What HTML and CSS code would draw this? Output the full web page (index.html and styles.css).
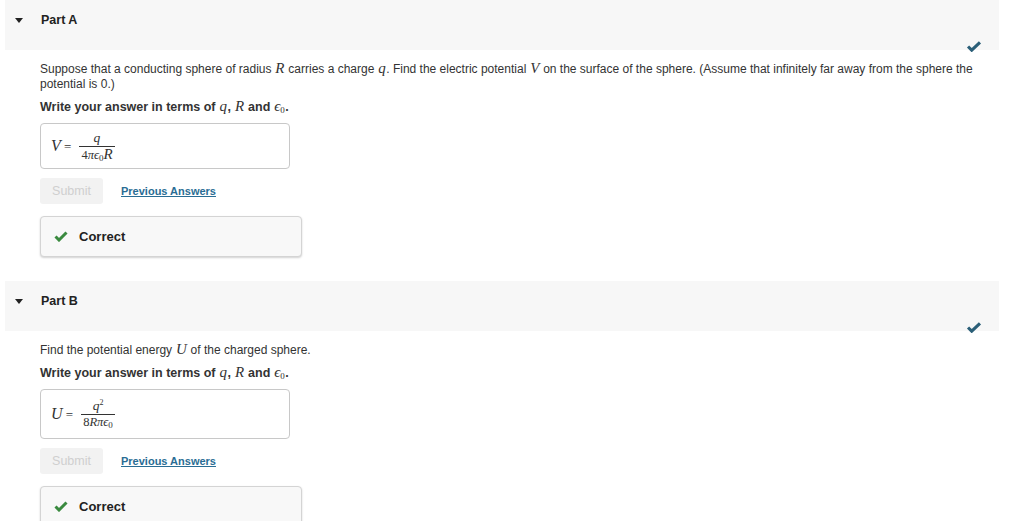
FILE: index.html
```html
<!DOCTYPE html>
<html lang="en">
<head>
  <meta charset="UTF-8" />
  <meta name="viewport" content="width=device-width, initial-scale=1.0"/>
  <title>Parts</title>
  <link rel="stylesheet" href="styles.css">
</head>
<body>

  <div class="part">
    <div class="part-head">
      <span class="caret"></span>
      <h2>Part A</h2>
      <svg class="done" viewBox="0 0 16 12" width="16" height="11"><path d="M1.5 6 L5.5 10 L14.5 1.5" fill="none" stroke="#2b5f78" stroke-width="3.4"/></svg>
    </div>
    <div class="part-body">
      <p class="question">Suppose that a conducting sphere of radius <i class="m">R</i> carries a charge <i class="m">q</i>. Find the electric potential <i class="m">V</i> on the surface of the sphere. (Assume that infinitely far away from the sphere the potential is 0.)</p>
      <p class="hint">Write your answer in terms of <i class="m">q</i>, <i class="m">R</i> and <i class="m">&#x3F5;<sub>0</sub></i>.</p>
      <div class="answer">
        <span class="lhs"><i>V</i> =</span>
        <span class="frac">
          <span class="num"><i>q</i></span>
          <span class="den">4<i>&pi;&#x3F5;</i><sub>0</sub><i class="big">R</i></span>
        </span>
      </div>
      <div class="actions">
        <button class="submit" disabled>Submit</button>
        <a href="#" class="prev">Previous Answers</a>
      </div>
      <div class="result">
        <svg viewBox="0 0 14 11" width="14" height="11"><path d="M1.5 5.5 L5 9 L12.5 1.5" fill="none" stroke="#3a8a3f" stroke-width="3"/></svg>
        <span>Correct</span>
      </div>
    </div>
  </div>

  <div class="part">
    <div class="part-head">
      <span class="caret"></span>
      <h2>Part B</h2>
      <svg class="done" viewBox="0 0 16 12" width="16" height="11"><path d="M1.5 6 L5.5 10 L14.5 1.5" fill="none" stroke="#2b5f78" stroke-width="3.4"/></svg>
    </div>
    <div class="part-body">
      <p class="question">Find the potential energy <i class="m">U</i> of the charged sphere.</p>
      <p class="hint">Write your answer in terms of <i class="m">q</i>, <i class="m">R</i> and <i class="m">&#x3F5;<sub>0</sub></i>.</p>
      <div class="answer tall">
        <span class="lhs"><i>U</i> =</span>
        <span class="frac">
          <span class="num"><i>q</i><sup>2</sup></span>
          <span class="den">8<i>R&pi;&#x3F5;</i><sub>0</sub></span>
        </span>
      </div>
      <div class="actions">
        <button class="submit" disabled>Submit</button>
        <a href="#" class="prev">Previous Answers</a>
      </div>
      <div class="result">
        <svg viewBox="0 0 14 11" width="14" height="11"><path d="M1.5 5.5 L5 9 L12.5 1.5" fill="none" stroke="#3a8a3f" stroke-width="3"/></svg>
        <span>Correct</span>
      </div>
    </div>
  </div>

</body>
</html>
```

FILE: styles.css
```css
* {
  box-sizing: border-box;
}
body {
  font-family: 'Liberation Sans', Arial, sans-serif;
  background: #fff;
  color: #333;
  margin: 0;
  padding: 0;
  font-size: 12px;
}

.part {
  margin-bottom: 24px;
}

.part-head {
  position: relative;
  margin-left: 5px;
  width: 994px;
  height: 50px;
  background: #f7f7f7;
  display: flex;
  align-items: flex-start;
  padding: 13px 0 0 10px;
}

.caret {
  width: 0;
  height: 0;
  border-left: 4.5px solid transparent;
  border-right: 4.5px solid transparent;
  border-top: 5px solid #222;
  margin: 5px 18px 0 0;
}

.part-head h2 {
  margin: 0;
  font-size: 12.5px;
  line-height: 15px;
  font-weight: bold;
  color: #222;
}

.done {
  position: absolute;
  right: 17px;
  bottom: -2px;
}

.part-body {
  padding: 11px 40px 0 40px;
}

.question {
  margin: 0;
  line-height: 15px;
  width: 950px;
}

.hint {
  margin: 7px 0 0;
  font-size: 12.5px;
  font-weight: bold;
  line-height: 15px;
}

.m {
  font-family: 'Liberation Serif', 'Times New Roman', serif;
  font-size: 15px;
  line-height: 1;
  font-style: italic;
  font-weight: normal;
  margin: 0 0.5px;
}

.m sub, .den sub {
  font-style: normal;
  font-size: 9px;
  line-height: 0;
  vertical-align: -2px;
}

.answer {
  margin-top: 8px;
  width: 250px;
  height: 46px;
  border: 1px solid #c8c8c8;
  border-radius: 4px;
  display: flex;
  align-items: center;
  padding-left: 10px;
  font-family: 'Liberation Serif', 'Times New Roman', serif;
  color: #333;
}

.answer.tall {
  height: 50px;
}

.lhs {
  font-size: 13px;
  margin-right: 8px;
}

.lhs i {
  font-size: 16px;
}

.frac {
  display: inline-flex;
  flex-direction: column;
  align-items: center;
  font-size: 12.5px;
  line-height: 13px;
}

.num {
  padding: 0 2px 1px;
}

.num i {
  font-size: 13.5px;
}

.num sup {
  font-size: 8px;
  vertical-align: 5px;
  line-height: 0;
}

.den {
  border-top: 1px solid #333;
  padding: 1px 2px 0;
}

.den .big {
  font-size: 15px;
}

.actions {
  display: flex;
  align-items: center;
  gap: 18px;
  margin-top: 9px;
}

.submit {
  width: 63px;
  height: 26px;
  border: none;
  border-radius: 3px;
  background: #f2f2f2;
  color: #cfcfcf;
  font-family: 'Liberation Sans', Arial, sans-serif;
  font-size: 12.5px;
}

.prev {
  color: #2a6d94;
  font-weight: bold;
  font-size: 11px;
  text-decoration: underline;
}

.result {
  margin-top: 12px;
  width: 262px;
  height: 41px;
  border: 1px solid #d4d4d4;
  border-radius: 4px;
  background: #f8f8f8;
  box-shadow: 0 1px 2px rgba(0, 0, 0, 0.18);
  display: flex;
  align-items: center;
  padding-left: 13px;
  gap: 11px;
  font-size: 13px;
  font-weight: bold;
  color: #222;
}
```
